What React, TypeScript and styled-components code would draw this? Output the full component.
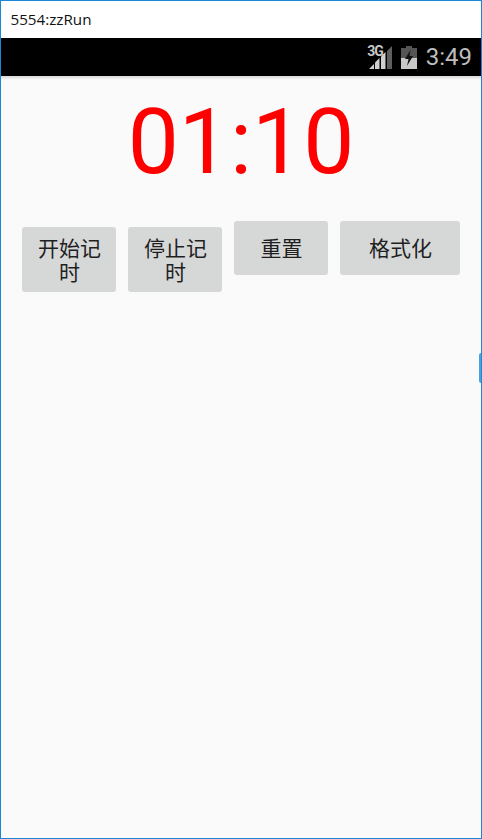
// App.tsx
import React from 'react';
import styled, { createGlobalStyle } from 'styled-components';

const GlobalStyle = createGlobalStyle`
  html, body {
    margin: 0;
    padding: 0;
    background: #fafafa;
  }
`;

const Frame = styled.div`
  position: relative;
  width: 482px;
  height: 839px;
  box-sizing: border-box;
  border: 1px solid #1a86d8;
  display: flex;
  flex-direction: column;
  overflow: hidden;
  background: #fafafa;
`;

const TitleBar = styled.div`
  height: 37px;
  box-sizing: border-box;
  flex: none;
  background: #fff;
  display: flex;
  align-items: center;
  padding: 0 0 2px 9.5px;
  font-family: "Open Sans", "Noto Sans", sans-serif;
  font-size: 15.2px;
  color: #111;
`;

const StatusBar = styled.div`
  position: relative;
  height: 38px;
  flex: none;
  background: #000;
  display: flex;
  align-items: center;
  justify-content: flex-end;
  padding-right: 9px;

  &::after {
    content: '';
    position: absolute;
    left: 0;
    right: 0;
    top: 100%;
    height: 4px;
    background: linear-gradient(rgba(0, 0, 0, 0.14), rgba(0, 0, 0, 0));
  }
`;

const Signal = styled.div`
  position: relative;
  width: 23px;
  height: 23px;
  margin-right: 9px;
`;

const SignalLabel = styled.span`
  position: absolute;
  left: -2px;
  top: -3px;
  font-family: Roboto, sans-serif;
  font-size: 14px;
  font-weight: 700;
  letter-spacing: -1px;
  color: #c8c8c8;
`;

const Clock = styled.span`
  font-family: Roboto, sans-serif;
  font-size: 24px;
  color: #bdbdbd;
  margin-left: 8.5px;
`;

const Content = styled.main`
  flex: 1;
  display: flex;
  flex-direction: column;
  align-items: center;
`;

const Timer = styled.div`
  font-family: Roboto, sans-serif;
  font-size: 91px;
  line-height: 112px;
  margin-top: 10px;
  color: #ff0000;
`;

const ButtonRow = styled.div`
  align-self: stretch;
  display: flex;
  align-items: baseline;
  gap: 12px;
  padding-left: 21px;
  margin-top: 23px;
`;

const ActionButton = styled.button<{ $wide?: boolean; $lines?: number }>`
  width: ${props => (props.$wide ? '120px' : '94px')};
  height: ${props => (props.$lines === 2 ? '65px' : '54px')};
  padding: ${props => (props.$lines === 2 ? '1px 10px 2px 11px' : '0 10px 2px 11px')};
  border: none;
  border-radius: 3px;
  background: #d6d7d7;
  color: #1f1f1f;
  font-family: "Noto Sans CJK SC", sans-serif;
  font-size: 21px;
  line-height: 24px;
  text-align: center;
`;

const EdgeHandle = styled.div`
  position: absolute;
  right: 0;
  top: 352px;
  width: 2px;
  height: 30px;
  background: #4aa3dc;
  border-radius: 2px 0 0 2px;
`;

const SignalBars = () => (
  <svg width="23" height="23" viewBox="0 0 23 23" style={{ position: 'absolute', left: 0, top: 0 }}>
    <path d="M23 0V23H18V5Z" fill="#5e5e5e" />
    <path d="M0 23L5 18V23Z" fill="#d0d0d0" />
    <path d="M6 16.500L10.500 12V23H6Z" fill="#d0d0d0" />
    <path d="M12 10.500L16.500 6V23H12Z" fill="#d0d0d0" />
  </svg>
);

const BatteryIcon = () => (
  <svg width="16" height="23" viewBox="0 0 16 23">
    <path d="M5 0H11V2H16V23H0V2H5Z" fill="#555" />
    <path d="M0 12H16V23H0Z" fill="#c8c8c8" />
    <path d="M9.500 4L4 13H7.500L6 20L12 10H8.500Z" fill="#111" />
  </svg>
);

const App: React.FC = () => {
  return (
    <>
      <GlobalStyle />
      <Frame>
        <TitleBar>5554:zzRun</TitleBar>
        <StatusBar>
          <Signal>
            <SignalBars />
            <SignalLabel>3G</SignalLabel>
          </Signal>
          <BatteryIcon />
          <Clock>3:49</Clock>
        </StatusBar>
        <Content>
          <Timer>01:10</Timer>
          <ButtonRow>
            <ActionButton $lines={2}>开始记时</ActionButton>
            <ActionButton $lines={2}>停止记时</ActionButton>
            <ActionButton>重置</ActionButton>
            <ActionButton $wide>格式化</ActionButton>
          </ButtonRow>
        </Content>
        <EdgeHandle />
      </Frame>
    </>
  );
};

export default App;
